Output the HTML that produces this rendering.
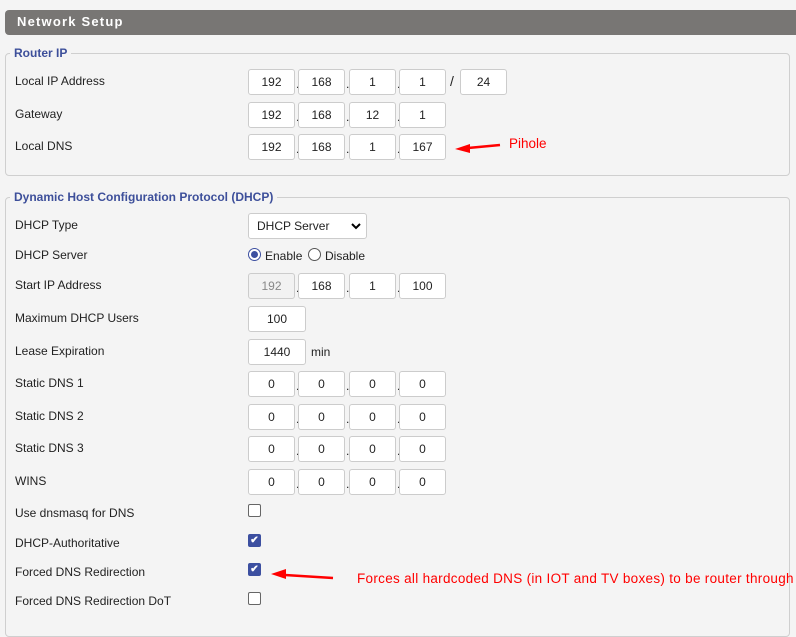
<!DOCTYPE html>
<html><head><style>
*{box-sizing:border-box;margin:0;padding:0}
body{width:796px;height:624px;background:#f4f4f4;font-family:"Liberation Sans",sans-serif;font-size:12px;color:#222;position:relative;overflow:hidden}
.a{position:absolute}
.hdr{left:5px;top:10px;width:800px;height:25px;background:#787674;border-radius:4px;color:#fff;font-weight:bold;font-size:13px;letter-spacing:1.2px;padding:4px 0 0 12px}
.fs{border:1px solid #cfcfcf;border-radius:4px}
.lg{background:#f4f4f4;color:#3d4f9a;font-weight:bold;font-size:12px;padding:0 4px}
.l{left:15px}
.in{position:absolute;width:47px;height:26px;background:#fff;border:1px solid #ccc;border-radius:3px;text-align:center;line-height:24px;font-size:12px}
.dot{position:absolute;font-size:12px}
.cb{position:absolute;left:248px;width:13px;height:13px;border:1px solid #666;border-radius:2px;background:#fff}
.ck{background:#3c4fa0;border-color:#3c4fa0;color:#fff;font-size:10px;line-height:11px;text-align:center;font-weight:bold}
.red{color:#f00;font-size:13.5px}
</style></head><body>
<div class="a hdr">Network Setup</div>
<div class="a fs" style="left:5px;top:53px;width:785px;height:123px"></div>
<div class="a lg" style="left:10px;top:46px">Router IP</div>
<div class="a l" style="top:74px">Local IP Address</div>
<div class="a l" style="top:107px">Gateway</div>
<div class="a l" style="top:139px">Local DNS</div>

<div class="a fs" style="left:5px;top:197px;width:785px;height:440px"></div>
<div class="a lg" style="left:10px;top:190px">Dynamic Host Configuration Protocol (DHCP)</div>
<div class="a l" style="top:218px">DHCP Type</div>
<div class="a l" style="top:248px">DHCP Server</div>
<div class="a l" style="top:278px">Start IP Address</div>
<div class="a l" style="top:311px">Maximum DHCP Users</div>
<div class="a l" style="top:344px">Lease Expiration</div>
<div class="a l" style="top:376px">Static DNS 1</div>
<div class="a l" style="top:409px">Static DNS 2</div>
<div class="a l" style="top:441px">Static DNS 3</div>
<div class="a l" style="top:474px">WINS</div>
<div class="a l" style="top:506px">Use dnsmasq for DNS</div>
<div class="a l" style="top:536px">DHCP-Authoritative</div>
<div class="a l" style="top:565px">Forced DNS Redirection</div>
<div class="a l" style="top:594px">Forced DNS Redirection DoT</div>

<div id="rows"></div>
<div class="in" style="left:460px;top:69px">24</div>
<div class="dot" style="left:450px;top:73px;font-size:14px">/</div>

<div class="a" style="left:248px;top:213px;width:119px;height:26px;background:#fff;border:1px solid #ccc;border-radius:3px;padding:5px 0 0 8px">DHCP Server
<svg class="a" style="left:102px;top:9px" width="10" height="7" viewBox="0 0 10 7"><path d="M1 1l4 4 4-4" stroke="#000" stroke-width="2" fill="none"/></svg></div>

<div class="a" style="left:248px;top:248px;width:13px;height:13px;border:1px solid #3c4fa0;border-radius:50%;background:#fff"><div class="a" style="left:2px;top:2px;width:7px;height:7px;border-radius:50%;background:#3c4fa0"></div></div>
<div class="a" style="left:265px;top:249px">Enable</div>
<div class="a" style="left:308px;top:248px;width:13px;height:13px;border:1px solid #555;border-radius:50%;background:#fff"></div>
<div class="a" style="left:325px;top:249px">Disable</div>

<div class="in" style="left:248px;top:306px;width:58px">100</div>
<div class="in" style="left:248px;top:339px;width:58px">1440</div>
<div class="a" style="left:311px;top:345px">min</div>

<div class="cb" style="top:504px"></div>
<div class="cb ck" style="top:534px">✔</div>
<div class="cb ck" style="top:563px">✔</div>
<div class="cb" style="top:592px"></div>

<svg class="a" style="left:0;top:0" width="796" height="624">
<path d="M500 145L468 148" stroke="#f00" stroke-width="2.5"/><path d="M455 149l15-5v9z" fill="#f00"/>
<path d="M333 578L285 575" stroke="#f00" stroke-width="2.5"/><path d="M271 574l15-5v10z" fill="#f00"/>
</svg>
<div class="a red" style="left:509px;top:136px">Pihole</div>
<div class="a red" style="left:357px;top:571px;white-space:nowrap;letter-spacing:0.3px">Forces all hardcoded DNS (in IOT and TV boxes) to be router through</div>

<script>
var rows=[[69,['192','168','1','1']],[102,['192','168','12','1']],[134,['192','168','1','167']],[273,['192','168','1','100']],[371,['0','0','0','0']],[404,['0','0','0','0']],[436,['0','0','0','0']],[469,['0','0','0','0']]];
var xs=[248,298,349,399],h='';
rows.forEach(function(r){r[1].forEach(function(v,i){var dis=(r[0]==273&&i==0);h+='<div class="in" style="left:'+xs[i]+'px;top:'+r[0]+'px;'+(dis?'background:#f2f2f2;color:#888;':'')+'">'+v+'</div>';if(i<3)h+='<div class="dot" style="left:'+(xs[i]+48)+'px;top:'+(r[0]+8)+'px">.</div>';});});
document.getElementById('rows').innerHTML=h;
</script>
</body></html>
